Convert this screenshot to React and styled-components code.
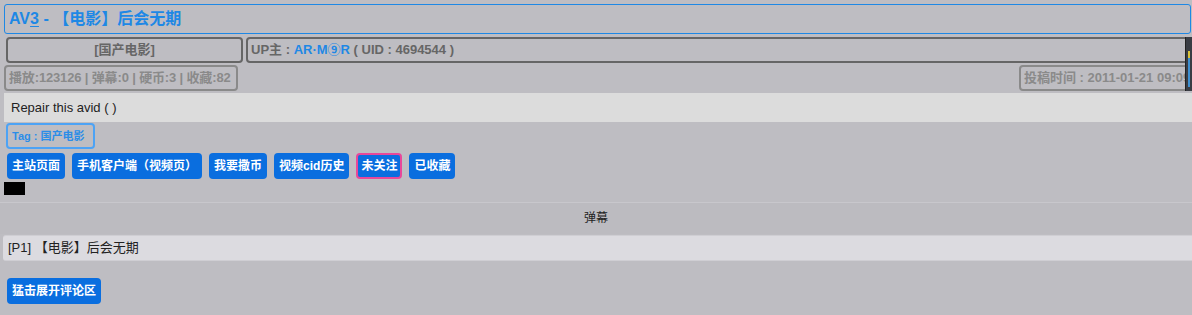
import styled, { createGlobalStyle } from "styled-components";

const Global = createGlobalStyle`
body{
  margin:0;
  background:#bebdc2;
  font-family:"Liberation Sans","Noto Sans CJK SC",Arial,sans-serif;
  overflow:hidden;
}
`;

const Page = styled.div`
position:relative;
width:1192px;
height:315px;
overflow:hidden;
background:#bebdc2;
`;

const Title = styled.div`
margin:4px 1px 0 4px;
height:28px;
line-height:28px;
border:1px solid #1e88e5;
border-radius:3px;
padding-left:4px;
font-size:16px;
font-weight:bold;
color:#1e88e5;
white-space:nowrap;
`;

const AvLink = styled.span`
text-decoration:underline;
text-underline-offset:2px;
`;

const InfoRow = styled.div`
display:flex;
gap:3px;
margin:${p => p.top || 3}px 0 0 ${p => p.left || 6}px;
height:26px;
white-space:nowrap;
`;

const Box = styled.div`
box-sizing:border-box;
height:26px;
border:2px solid ${p => p.tone};
border-radius:4px;
color:${p => p.tone};
font-size:13px;
font-weight:bold;
line-height:22px;
padding:0 3px;
overflow:hidden;
letter-spacing:${p => p.tight ? "-0.15px" : "normal"};
width:${p => p.w ? p.w + "px" : "auto"};
flex:${p => p.grow ? "1 0 auto" : "none"};
text-align:${p => p.center ? "center" : "left"};
margin-left:${p => p.push ? "auto" : "0"};
margin-right:${p => p.over ? -p.over + "px" : "0"};
`;

const Blue = styled.span`
color:#1e88e5;
`;

const Meter = styled.div`
position:absolute;
top:37px;
right:0;
width:6px;
height:54px;
background:#3a3d44;
border-left:1px solid #222;
&::after{
  content:"";
  position:absolute;
  left:2px;
  top:14px;
  width:2px;
  height:36px;
  background:linear-gradient(#d9c33a 0 20%, #3d8fd0 20% 100%);
}
`;

const Repair = styled.div`
margin:2px 0 0 4px;
height:29px;
line-height:29px;
background:#dcdcdc;
padding-left:7px;
font-size:13px;
color:#222;
`;

const Tag = styled.div`
display:inline-block;
box-sizing:border-box;
margin:1px 0 0 6px;
width:89px;
height:26px;
line-height:22px;
padding:0 4px;
border:2px solid #4da3f5;
border-radius:4px;
font-size:11px;
font-weight:bold;
color:#2b8de8;
white-space:nowrap;
`;

const Buttons = styled.div`
display:flex;
gap:7px;
margin:4px 0 0 7px;
`;

const Btn = styled.div`
box-sizing:border-box;
height:26px;
line-height:${p => p.hot ? "22px" : "26px"};
padding:0 ${p => p.hot ? "3px" : "5px"};
background:#0a6edf;
border:${p => p.hot ? "2px solid #e8479a" : "none"};
border-radius:4px;
color:#fff;
font-size:12px;
font-weight:bold;
white-space:nowrap;
`;

const Black = styled.div`
margin:3px 0 0 4px;
width:21px;
height:13px;
background:#000;
`;

const DanmakuHead = styled.div`
margin-top:7px;
height:31px;
line-height:31px;
border-top:1px solid #c8c7cc;
background:#bcbbc0;
text-align:center;
font-size:12px;
color:#222;
`;

const Part = styled.div`
margin:1px 0 0 3px;
height:24px;
line-height:24px;
background:#dcdbe0;
border-top:1px solid #cfced3;
border-bottom:1px solid #cfced3;
border-radius:3px 0 0 3px;
padding-left:5px;
font-size:13px;
color:#222;
`;

const Comment = styled(Btn)`
display:inline-block;
margin:17px 0 0 7px;
`;

export default function App() {
  return (
    <Page>
      <Global />
      <Title>
        AV<AvLink>3</AvLink> - 【电影】后会无期
      </Title>
      <InfoRow>
        <Box tone="#666" w={237} center>[国产电影]</Box>
        <Box tone="#666" grow over={20}>
          UP主 : <Blue>AR·M⑨R</Blue> ( UID : 4694544 )
        </Box>
      </InfoRow>
      <InfoRow top={2} left={4}>
        <Box tone="#8a8a8a" w={234} tight>播放:123126 | 弹幕:0 | 硬币:3 | 收藏:82</Box>
        <Box tone="#8a8a8a" w={180} push over={7}>投稿时间 : 2011-01-21 09:09:00</Box>
      </InfoRow>
      <Meter />
      <Repair>Repair this avid (  )</Repair>
      <Tag>Tag : 国产电影</Tag>
      <Buttons>
        <Btn>主站页面</Btn>
        <Btn>手机客户端（视频页）</Btn>
        <Btn>我要撒币</Btn>
        <Btn>视频cid历史</Btn>
        <Btn hot>未关注</Btn>
        <Btn>已收藏</Btn>
      </Buttons>
      <Black />
      <DanmakuHead>弹幕</DanmakuHead>
      <Part>[P1] 【电影】后会无期</Part>
      <Comment>猛击展开评论区</Comment>
    </Page>
  );
}
